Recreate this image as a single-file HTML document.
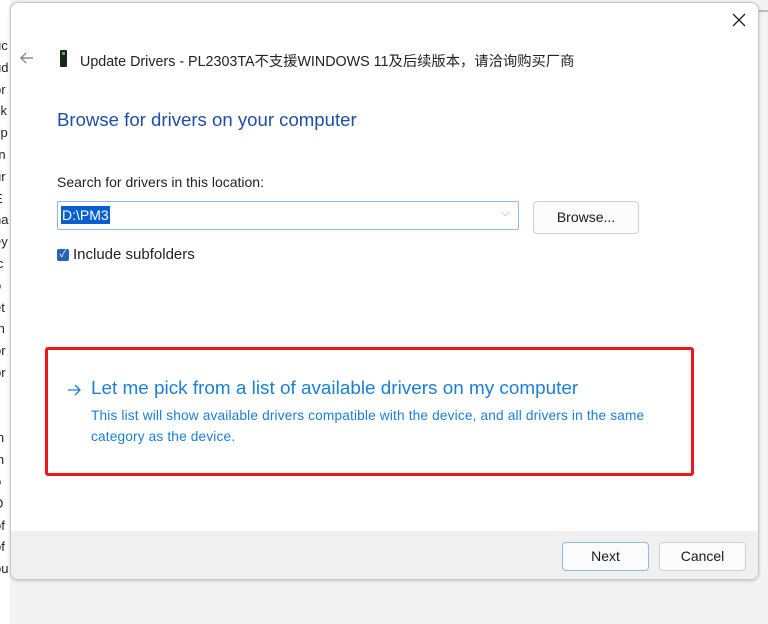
<!DOCTYPE html>
<html><head><meta charset="utf-8"><style>
html,body{margin:0;height:589px}
body{width:768px;height:589px;background:#f3f3f3;position:relative;overflow:hidden;font-family:"Liberation Sans","Noto Sans CJK SC",sans-serif}
.strip{position:absolute;left:-6px;top:0;width:16px;font-size:13px;color:#222;line-height:21.8px;padding-top:35px;white-space:nowrap;background:#fff;height:589px;overflow:hidden}
.dlg{position:absolute;left:10px;top:2px;width:747px;height:576px;background:#fff;border:1px solid #c8c8c8;border-radius:8px;overflow:hidden;box-shadow:0 1px 3px rgba(0,0,0,.2)}
.abs{position:absolute;white-space:nowrap}
.foot{position:absolute;left:0;top:528px;width:100%;height:48px;background:#f0f0f0}
.btn{position:absolute;height:27px;border:1px solid #d0d0d0;border-radius:4px;background:#fbfbfb;font-size:14px;color:#1a1a1a;text-align:center;line-height:27px}
</style></head><body>
<div class="strip">uc<br>ud<br>or<br>sk<br>sp<br>rn<br>ur<br>E<br>na<br>ey<br>ic<br>o<br>et<br>th<br>or<br>or<br>l<br>l<br>in<br>in<br>o<br>D<br>of<br>of<br>ou</div>
<div class="abs" style="left:758px;top:0;width:10px;height:10px;border-bottom:2px solid #bbb"></div>
<div class="dlg">
 <svg class="abs" style="left:721px;top:10px" width="14" height="14"><path d="M1 1L13 13M13 1L1 13" stroke="#222" stroke-width="1.3"/></svg>
 <svg class="abs" style="left:9px;top:49px" width="14" height="12"><path d="M13 6H1M6 1L1 6L6 11" stroke="#777" stroke-width="1.2" fill="none"/></svg>
 <div class="abs" style="left:49px;top:47px;width:7px;height:17px;background:#222;border-radius:1px"><div style="margin:2px auto;width:3px;height:3px;background:#2c2"></div></div>
 <div class="abs" style="left:69px;top:47px;font-size:14.3px;color:#222">Update Drivers - PL2303TA不支援WINDOWS 11及后续版本，请洽询购买厂商</div>
 <div class="abs" style="left:46px;top:106px;font-size:18.6px;color:#1c4fa8">Browse for drivers on your computer</div>
 <div class="abs" style="left:46px;top:171px;font-size:14px;color:#222">Search for drivers in this location:</div>
 <div class="abs" style="left:46px;top:198px;width:460px;height:27px;border:1px solid #8fbbe3;border-radius:2px"></div>
 <div class="abs" style="left:50px;top:203px;font-size:14px;color:#fff;background:#0a5fd0;padding:0 1px;line-height:18px">D:\PM3</div>
 <div class="abs" style="left:490px;top:204px;font-size:11px;color:#999">⌵</div>
 <div class="btn" style="left:522px;top:198px;width:104px;height:31px;line-height:31px">Browse...</div>
 <div class="abs" style="left:46px;top:246px;width:12px;height:12px;background:#2563b8;border-radius:2px;color:#fff;font-size:10px;line-height:12px;text-align:center">✓</div>
 <div class="abs" style="left:62px;top:243px;font-size:15px;color:#222">Include subfolders</div>
 <div class="abs" style="left:34px;top:344px;width:643px;height:123px;border:3px solid #f0151a;border-radius:3px"></div>
 <svg class="abs" style="left:56px;top:381px" width="14" height="12"><path d="M1 6H13M8 1L13 6L8 11" stroke="#1a7fd8" stroke-width="1.3" fill="none"/></svg>
 <div class="abs" style="left:80px;top:375px;font-size:18.9px;color:#1a7fd8">Let me pick from a list of available drivers on my computer</div>
 <div class="abs" style="left:80px;top:402px;font-size:13.7px;color:#1a7fd8;line-height:21px;white-space:normal;width:600px;letter-spacing:0.15px">This list will show available drivers compatible with the device, and all drivers in the same<br>category as the device.</div>
 <div class="foot"></div>
 <div class="btn" style="left:551px;top:539px;width:85px;border-color:#8fbbe3">Next</div>
 <div class="btn" style="left:648px;top:539px;width:85px">Cancel</div>
</div>
</body></html>
